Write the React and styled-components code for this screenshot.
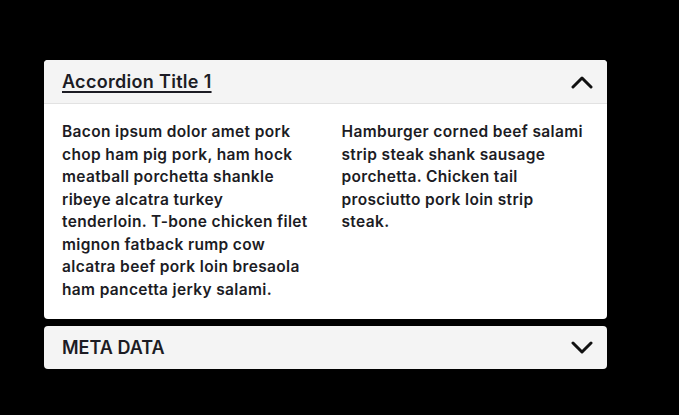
import React, { useState } from 'react'
import styled, { createGlobalStyle } from 'styled-components'

const GlobalStyle = createGlobalStyle`
  html, body {
    margin: 0;
    background: #000;
  }
  body {
    font-family: Inter, "Noto Sans", sans-serif;
  }
`

const Page = styled.div`
  padding: 60px 0 0 44px;
  display: flex;
  flex-direction: column;
  gap: 7px;
  width: 563px;
`

const Panel = styled.div`
  background: #fff;
  border-radius: 4px;
  overflow: hidden;
`

const Header = styled.button`
  display: flex;
  align-items: center;
  justify-content: space-between;
  width: 100%;
  height: ${p => (p.open ? '44px' : '43px')};
  padding: 0 14px 0 18px;
  border: none;
  border-bottom: ${p => (p.open ? '1px solid #e2e2e2' : 'none')};
  background: #f4f4f4;
  cursor: pointer;
  font-family: inherit;
  box-sizing: border-box;
`

const Title = styled.span`
  font-size: 18px;
  font-weight: 600;
  letter-spacing: ${p => (p.underline ? '0.3px' : '0')};
  color: #1c1c24;
  text-decoration: ${p => (p.underline ? 'underline' : 'none')};
  text-underline-offset: 3px;
  text-decoration-thickness: 1.5px;
`

const Body = styled.div`
  display: grid;
  grid-template-columns: 1fr 1fr;
  column-gap: 32px;
  padding: 17px 18px 18px 18px;
`

const Text = styled.p`
  margin: 0;
  font-size: 15.5px;
  font-weight: 600;
  letter-spacing: 0.35px;
  line-height: 22.5px;
  color: #1c1c24;
`

const Chevron = ({ up }) => (
  <svg width="22" height="14" viewBox="0 0 22 14" fill="none">
    <path
      d={up ? 'M2 12 L11 3 L20 12' : 'M2 2 L11 11 L20 2'}
      stroke="#111"
      strokeWidth="3"
      strokeLinecap="round"
      strokeLinejoin="round"
    />
  </svg>
)

export default function App() {
  const [open, setOpen] = useState({ first: true, meta: false })
  return (
    <>
      <GlobalStyle />
      <Page>
        <Panel>
          <Header open={open.first} onClick={() => setOpen({ ...open, first: !open.first })}>
            <Title underline>Accordion Title 1</Title>
            <Chevron up={open.first} />
          </Header>
          {open.first && (
            <Body>
              <Text>
                Bacon ipsum dolor amet pork chop ham pig pork, ham hock meatball porchetta shankle
                ribeye alcatra turkey tenderloin. T-bone chicken filet mignon fatback rump cow
                alcatra beef pork loin bresaola ham pancetta jerky salami.
              </Text>
              <Text>
                Hamburger corned beef salami strip steak shank sausage porchetta. Chicken tail
                prosciutto pork loin strip<br />steak.
              </Text>
            </Body>
          )}
        </Panel>
        <Panel>
          <Header open={open.meta} onClick={() => setOpen({ ...open, meta: !open.meta })}>
            <Title>META DATA</Title>
            <Chevron up={open.meta} />
          </Header>
        </Panel>
      </Page>
    </>
  )
}
